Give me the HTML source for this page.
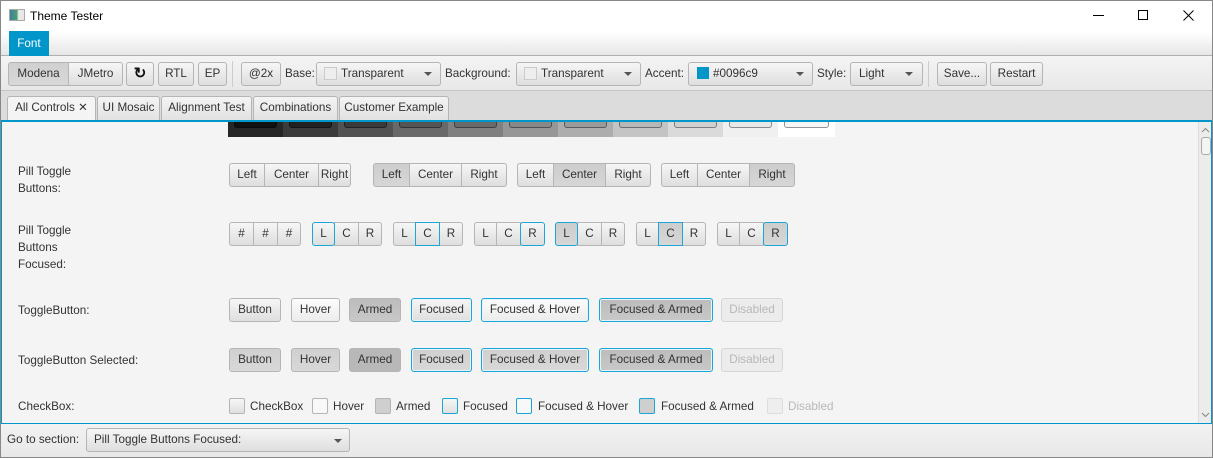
<!DOCTYPE html>
<html><head><meta charset="utf-8"><style>
*{box-sizing:border-box;margin:0;padding:0}
body{width:1213px;height:458px;overflow:hidden;background:#fff;font-family:"Liberation Sans",sans-serif;font-size:11.7px;color:#333;position:relative}
.a{position:absolute}
.t{position:absolute;white-space:nowrap;line-height:14px}
.b{position:absolute;height:24px;border:1px solid #b5b5b5;border-radius:3px;background:linear-gradient(#f6f6f6,#dedede);text-align:center;line-height:22px;white-space:nowrap;color:#333}
.p{background:linear-gradient(#d0d0d0,#d8d8d8)}
.h{background:linear-gradient(#fcfcfc,#ececec)}
.ar{background:linear-gradient(#bcbcbc,#c8c8c8)}
.f{border:1.5px solid #1aa6d6;box-shadow:inset 0 0 0 1px #e6f4fa}
.d{color:#b8b8b8;border-color:#d6d6d6;background:#ececec}
.s{position:absolute;height:24px;top:0;border:1px solid #b5b5b5;text-align:center;line-height:22px;background:linear-gradient(#f6f6f6,#dedede)}
.s.p{background:linear-gradient(#cdcdcd,#d6d6d6)}
.s.f{border:1.5px solid #1aa6d6;z-index:2;box-shadow:none}
.cb{position:absolute;width:16px;height:16px;border:1px solid #b5b5b5;border-radius:2px;background:linear-gradient(#f6f6f6,#e0e0e0)}
.arrow{position:absolute;width:0;height:0;border-left:4px solid transparent;border-right:4px solid transparent;border-top:4px solid #555}
.sw{position:absolute;top:110px;height:27px}
.sb{position:absolute;top:-2px;height:20px;border:1px solid rgba(0,0,0,.4);border-radius:3px;left:6px;right:6px}
</style></head><body>
<div class="a" style="left:0;top:0;width:1213px;height:458px;border:1px solid #888;z-index:9;pointer-events:none"></div>
<!-- title -->
<div class="a" style="left:9px;top:9px;width:16px;height:12px;border:1px solid #aaa;background:linear-gradient(90deg,#3b7fa0 0,#4fa070 50%,#e8e8e8 60%)"></div>
<div class="t" style="left:30px;top:9px;color:#000;font-size:12px">Theme Tester</div>
<div class="a" style="left:1093px;top:15px;width:11px;height:1px;background:#000"></div>
<div class="a" style="left:1138px;top:10px;width:10px;height:10px;border:1px solid #000"></div>
<svg class="a" style="left:1183px;top:10px" width="11" height="11"><path d="M0.5 0.5L10.5 10.5M10.5 0.5L0.5 10.5" stroke="#000" stroke-width="1"/></svg>
<!-- menu -->
<div class="a" style="left:1px;top:32px;width:1211px;height:24px;background:linear-gradient(#fff,#e6e6e6);border-bottom:1px solid #b0b0b0"></div>
<div class="a" style="left:9px;top:31px;width:40px;height:25px;background:#0096c9;color:#fff;line-height:25px;text-align:center">Font</div>
<!-- toolbar -->
<div class="a" style="left:1px;top:56px;width:1211px;height:35px;background:linear-gradient(#f4f4f4,#e8e8e8);border-bottom:1px solid #c4c4c4"></div>
<div class="b p" style="left:8px;top:62px;width:61px;border-radius:3px 0 0 3px">Modena</div>
<div class="b" style="left:68px;top:62px;width:55px;border-radius:0 3px 3px 0">JMetro</div>
<div class="b" style="left:126px;top:62px;width:28px;font-weight:bold;font-size:15px;color:#111">↻</div>
<div class="b" style="left:158px;top:62px;width:36px">RTL</div>
<div class="b" style="left:198px;top:62px;width:29px">EP</div>
<div class="a" style="left:232px;top:61px;width:1px;height:26px;background:#ccc"></div>
<div class="b" style="left:241px;top:62px;width:40px">@2x</div>
<div class="t" style="left:285px;top:67px">Base:</div>
<div class="b" style="left:316px;top:62px;width:125px;text-align:left;padding-left:24px">Transparent</div>
<div class="a" style="left:324px;top:67px;width:13px;height:13px;border:1px solid #ccc;background:#eee"></div><div class="arrow" style="left:424px;top:72px"></div>
<div class="t" style="left:445px;top:67px">Background:</div>
<div class="b" style="left:516px;top:62px;width:125px;text-align:left;padding-left:24px">Transparent</div>
<div class="a" style="left:524px;top:67px;width:13px;height:13px;border:1px solid #ccc;background:#eee"></div><div class="arrow" style="left:624px;top:72px"></div>
<div class="t" style="left:645px;top:67px">Accent:</div>
<div class="b" style="left:688px;top:62px;width:125px;text-align:left;padding-left:24px">#0096c9</div>
<div class="a" style="left:697px;top:67px;width:12px;height:12px;background:#0096c9"></div><div class="arrow" style="left:796px;top:72px"></div>
<div class="t" style="left:817px;top:67px">Style:</div>
<div class="b" style="left:850px;top:62px;width:73px;text-align:left;padding-left:8px">Light</div><div class="arrow" style="left:905px;top:72px"></div>
<div class="a" style="left:928px;top:61px;width:1px;height:26px;background:#ccc"></div>
<div class="b" style="left:937px;top:62px;width:50px">Save...</div>
<div class="b" style="left:990px;top:62px;width:53px">Restart</div>
<!-- tabs -->
<div class="a" style="left:1px;top:91px;width:1211px;height:30px;background:#dcdcdc"></div>
<div class="b" style="left:7px;top:96px;width:89px;height:25px;border-radius:3px 3px 0 0;background:#f4f4f4;border-bottom:0">All Controls ✕</div>
<div class="b" style="left:97px;top:96px;width:63px;height:25px;border-radius:3px 3px 0 0;background:linear-gradient(#f4f4f4,#e2e2e2)">UI Mosaic</div>
<div class="b" style="left:161px;top:96px;width:91px;height:25px;border-radius:3px 3px 0 0;background:linear-gradient(#f4f4f4,#e2e2e2)">Alignment Test</div>
<div class="b" style="left:253px;top:96px;width:85px;height:25px;border-radius:3px 3px 0 0;background:linear-gradient(#f4f4f4,#e2e2e2)">Combinations</div>
<div class="b" style="left:339px;top:96px;width:110px;height:25px;border-radius:3px 3px 0 0;background:linear-gradient(#f4f4f4,#e2e2e2)">Customer Example</div>
<!-- content -->
<div class="a" style="left:1px;top:120px;width:1211px;height:304px;background:#f4f4f4;border:1px solid #0096c9;border-top:2px solid #0096c9;overflow:hidden">
 <div class="a" style="left:0;top:0;width:1200px;height:302px;overflow:hidden">
 <div class="a" style="left:-1px;top:-122px;width:1200px;height:460px">
 <div class="sw" style="left:227px;width:55px;background:#262626"><div class="sb" style="background:#111"></div></div>
 <div class="sw" style="left:282px;width:55px;background:#3b3b3b"><div class="sb" style="background:#222"></div></div>
 <div class="sw" style="left:337px;width:55px;background:#525252"><div class="sb" style="background:#3a3a3a"></div></div>
 <div class="sw" style="left:392px;width:55px;background:#696969"><div class="sb" style="background:#555"></div></div>
 <div class="sw" style="left:447px;width:55px;background:#808080"><div class="sb" style="background:#6a6a6a"></div></div>
 <div class="sw" style="left:502px;width:55px;background:#969696"><div class="sb" style="background:#888"></div></div>
 <div class="sw" style="left:557px;width:55px;background:#adadad"><div class="sb" style="background:#9a9a9a"></div></div>
 <div class="sw" style="left:612px;width:55px;background:#c4c4c4"><div class="sb" style="background:#b8b8b8"></div></div>
 <div class="sw" style="left:667px;width:55px;background:#dadada"><div class="sb" style="background:#d0d0d0"></div></div>
 <div class="sw" style="left:722px;width:55px;background:#f0f0f0"><div class="sb" style="background:#e8e8e8"></div></div>
 <div class="sw" style="left:777px;width:57px;background:#fff"><div class="sb" style="background:#f6f6f6"></div></div>

 <div class="t" style="left:17px;top:165px">Pill Toggle</div><div class="t" style="left:17px;top:182px">Buttons:</div>
 <div class="a" style="left:228px;top:163px">
  <div class="s" style="left:0;width:36px;border-radius:3px 0 0 3px">Left</div><div class="s" style="left:35px;width:55px">Center</div><div class="s" style="left:89px;width:33px;border-radius:0 3px 3px 0">Right</div></div>
 <div class="a" style="left:372px;top:163px">
  <div class="s p" style="left:0;width:37px;border-radius:3px 0 0 3px">Left</div><div class="s" style="left:36px;width:53px">Center</div><div class="s" style="left:88px;width:46px;border-radius:0 3px 3px 0">Right</div></div>
 <div class="a" style="left:516px;top:163px">
  <div class="s" style="left:0;width:37px;border-radius:3px 0 0 3px">Left</div><div class="s p" style="left:36px;width:53px">Center</div><div class="s" style="left:88px;width:46px;border-radius:0 3px 3px 0">Right</div></div>
 <div class="a" style="left:660px;top:163px">
  <div class="s" style="left:0;width:37px;border-radius:3px 0 0 3px">Left</div><div class="s" style="left:36px;width:53px">Center</div><div class="s p" style="left:88px;width:46px;border-radius:0 3px 3px 0">Right</div></div>

 <div class="t" style="left:17px;top:224px">Pill Toggle</div><div class="t" style="left:17px;top:241px">Buttons</div><div class="t" style="left:17px;top:258px">Focused:</div>
 <div class="a" style="left:228px;top:222px">
  <div class="s" style="left:0;width:25px;border-radius:3px 0 0 3px">#</div><div class="s" style="left:24px;width:25px">#</div><div class="s" style="left:48px;width:24px;border-radius:0 3px 3px 0">#</div></div>
 <div class="a" style="left:311px;top:222px">
  <div class="s f" style="left:0;width:23px;border-radius:3px">L</div><div class="s" style="left:22px;width:25px">C</div><div class="s" style="left:46px;width:24px;border-radius:0 3px 3px 0">R</div></div>
 <div class="a" style="left:392px;top:222px">
  <div class="s" style="left:0;width:23px;border-radius:3px 0 0 3px">L</div><div class="s f" style="left:22px;width:25px">C</div><div class="s" style="left:46px;width:24px;border-radius:0 3px 3px 0">R</div></div>
 <div class="a" style="left:473px;top:222px">
  <div class="s" style="left:0;width:23px;border-radius:3px 0 0 3px">L</div><div class="s" style="left:22px;width:25px">C</div><div class="s f" style="left:46px;width:25px;border-radius:3px">R</div></div>
 <div class="a" style="left:554px;top:222px">
  <div class="s f p" style="left:0;width:23px;border-radius:3px">L</div><div class="s" style="left:22px;width:25px">C</div><div class="s" style="left:46px;width:24px;border-radius:0 3px 3px 0">R</div></div>
 <div class="a" style="left:635px;top:222px">
  <div class="s" style="left:0;width:23px;border-radius:3px 0 0 3px">L</div><div class="s f p" style="left:22px;width:25px">C</div><div class="s" style="left:46px;width:24px;border-radius:0 3px 3px 0">R</div></div>
 <div class="a" style="left:716px;top:222px">
  <div class="s" style="left:0;width:23px;border-radius:3px 0 0 3px">L</div><div class="s" style="left:22px;width:25px">C</div><div class="s f p" style="left:46px;width:25px;border-radius:3px">R</div></div>

 <div class="t" style="left:17px;top:304px">ToggleButton:</div>
 <div class="b" style="left:228px;top:298px;width:52px">Button</div>
 <div class="b h" style="left:290px;top:298px;width:49px">Hover</div>
 <div class="b ar" style="left:348px;top:298px;width:52px">Armed</div>
 <div class="b f" style="left:410px;top:298px;width:61px">Focused</div>
 <div class="b f h" style="left:480px;top:298px;width:108px">Focused &amp; Hover</div>
 <div class="b f ar" style="left:598px;top:298px;width:114px">Focused &amp; Armed</div>
 <div class="b d" style="left:720px;top:298px;width:62px">Disabled</div>

 <div class="t" style="left:17px;top:354px">ToggleButton Selected:</div>
 <div class="b p" style="left:228px;top:348px;width:52px">Button</div>
 <div class="b p" style="left:290px;top:348px;width:49px">Hover</div>
 <div class="b ar" style="left:348px;top:348px;width:52px;background:#b8b8b8">Armed</div>
 <div class="b f p" style="left:410px;top:348px;width:61px">Focused</div>
 <div class="b f p" style="left:480px;top:348px;width:108px">Focused &amp; Hover</div>
 <div class="b f ar" style="left:598px;top:348px;width:114px">Focused &amp; Armed</div>
 <div class="b d" style="left:720px;top:348px;width:62px">Disabled</div>

 <div class="t" style="left:17px;top:400px">CheckBox:</div>
 <div class="cb" style="left:228px;top:398px"></div><div class="t" style="left:249px;top:400px">CheckBox</div>
 <div class="cb" style="left:311px;top:398px;background:#f8f8f8"></div><div class="t" style="left:332px;top:400px">Hover</div>
 <div class="cb" style="left:374px;top:398px;background:#cfcfcf"></div><div class="t" style="left:395px;top:400px">Armed</div>
 <div class="cb" style="left:441px;top:398px;border:1.5px solid #1aa6d6"></div><div class="t" style="left:462px;top:400px">Focused</div>
 <div class="cb" style="left:515px;top:398px;border:1.5px solid #1aa6d6;background:#f8f8f8"></div><div class="t" style="left:537px;top:400px">Focused &amp; Hover</div>
 <div class="cb" style="left:638px;top:398px;border:1.5px solid #1aa6d6;background:#cfcfcf"></div><div class="t" style="left:660px;top:400px">Focused &amp; Armed</div>
 <div class="cb" style="left:766px;top:398px;border-color:#ddd;background:#eee"></div><div class="t" style="left:787px;top:400px;color:#b8b8b8">Disabled</div>
 </div></div>
 <div class="a" style="left:1196px;top:0;width:14px;height:302px;background:#ececec;border-left:1px solid #ddd"></div>
 <svg class="a" style="left:1199px;top:5px" width="9" height="6"><path d="M1 5L4.5 1.5L8 5" stroke="#888" fill="none"/></svg>
 <div class="a" style="left:1199px;top:15px;width:10px;height:18px;border:1px solid #aaa;border-radius:3px;background:#f4f4f4"></div>
 <svg class="a" style="left:1199px;top:290px" width="9" height="6"><path d="M1 1L4.5 4.5L8 1" stroke="#888" fill="none"/></svg>
</div>
<!-- bottom -->
<div class="a" style="left:1px;top:424px;width:1211px;height:33px;background:linear-gradient(#f2f2f2,#e8e8e8)"></div>
<div class="t" style="left:7px;top:433px">Go to section:</div>
<div class="b" style="left:86px;top:428px;width:264px;text-align:left;padding-left:7px">Pill Toggle Buttons Focused:</div>
<div class="arrow" style="left:334px;top:439px"></div>
</body></html>
